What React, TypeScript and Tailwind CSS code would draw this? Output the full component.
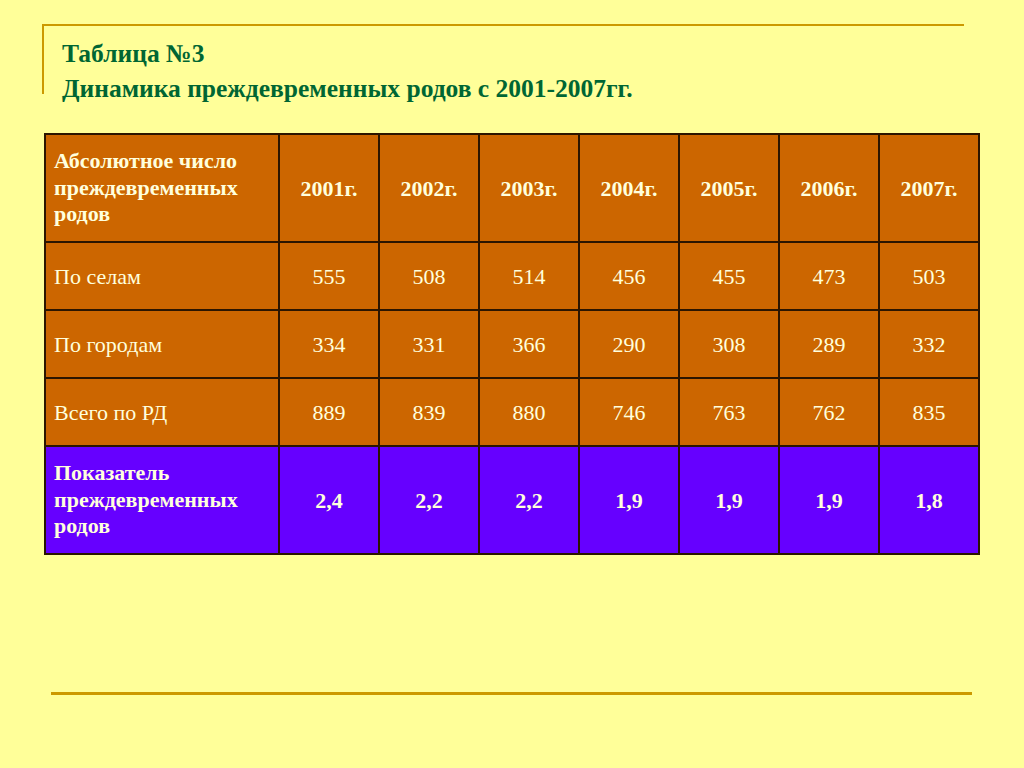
const years = ['2001г.', '2002г.', '2003г.', '2004г.', '2005г.', '2006г.', '2007г.'];

const rows = [
  { label: 'По селам', values: ['555', '508', '514', '456', '455', '473', '503'] },
  { label: 'По городам', values: ['334', '331', '366', '290', '308', '289', '332'] },
  { label: 'Всего по РД', values: ['889', '839', '880', '746', '763', '762', '835'] },
];

const rate = ['2,4', '2,2', '2,2', '1,9', '1,9', '1,9', '1,8'];

const cell = 'border-2 border-[#2b1500] text-center align-middle';

export default function App() {
  return (
    <div className="w-[1024px] h-[768px] bg-[#FFFF99] overflow-hidden font-['Liberation_Serif',serif] flex flex-col">
      <div className="ml-[42px] mt-[24px] w-[922px] h-[70px] border-l-2 border-t-2 border-[#CC9900] pl-[18px] pt-[10px]">
        <div className="text-[25.5px] leading-[35px] font-bold text-[#006633]">Таблица №3</div>
        <div className="text-[25.5px] leading-[35px] font-bold text-[#006633]">
          Динамика преждевременных родов с 2001-2007гг.
        </div>
      </div>

      <table className="ml-[44px] mt-[39px] w-[936px] border-collapse table-fixed text-[#FFFFDD]">
        <colgroup>
          <col className="w-[234px]" />
          {years.map(y => <col key={y} />)}
        </colgroup>
        <tbody>
          <tr className="h-[108px] bg-[#CC6600]">
            <td className="border-2 border-[#2b1500] px-[8px] text-left align-middle text-[22px] leading-[26.5px] font-bold">
              Абсолютное число преждевременных родов
            </td>
            {years.map(y => (
              <td key={y} className={`${cell} text-[22px] font-bold`}>{y}</td>
            ))}
          </tr>
          {rows.map(r => (
            <tr key={r.label} className="h-[68px] bg-[#CC6600]">
              <td className="border-2 border-[#2b1500] px-[8px] text-left align-middle text-[22px]">{r.label}</td>
              {r.values.map((v, i) => (
                <td key={i} className={`${cell} text-[22px]`}>{v}</td>
              ))}
            </tr>
          ))}
          <tr className="h-[108px] bg-[#6600FF]">
            <td className="border-2 border-[#2b1500] px-[8px] text-left align-middle text-[22px] leading-[26.5px] font-bold">
              Показатель преждевременных родов
            </td>
            {rate.map((v, i) => (
              <td key={i} className={`${cell} text-[22px] font-bold`}>{v}</td>
            ))}
          </tr>
        </tbody>
      </table>

      <div className="ml-[51px] mt-[137px] w-[921px] h-[3px] bg-[#CC9900]" />
    </div>
  );
}
